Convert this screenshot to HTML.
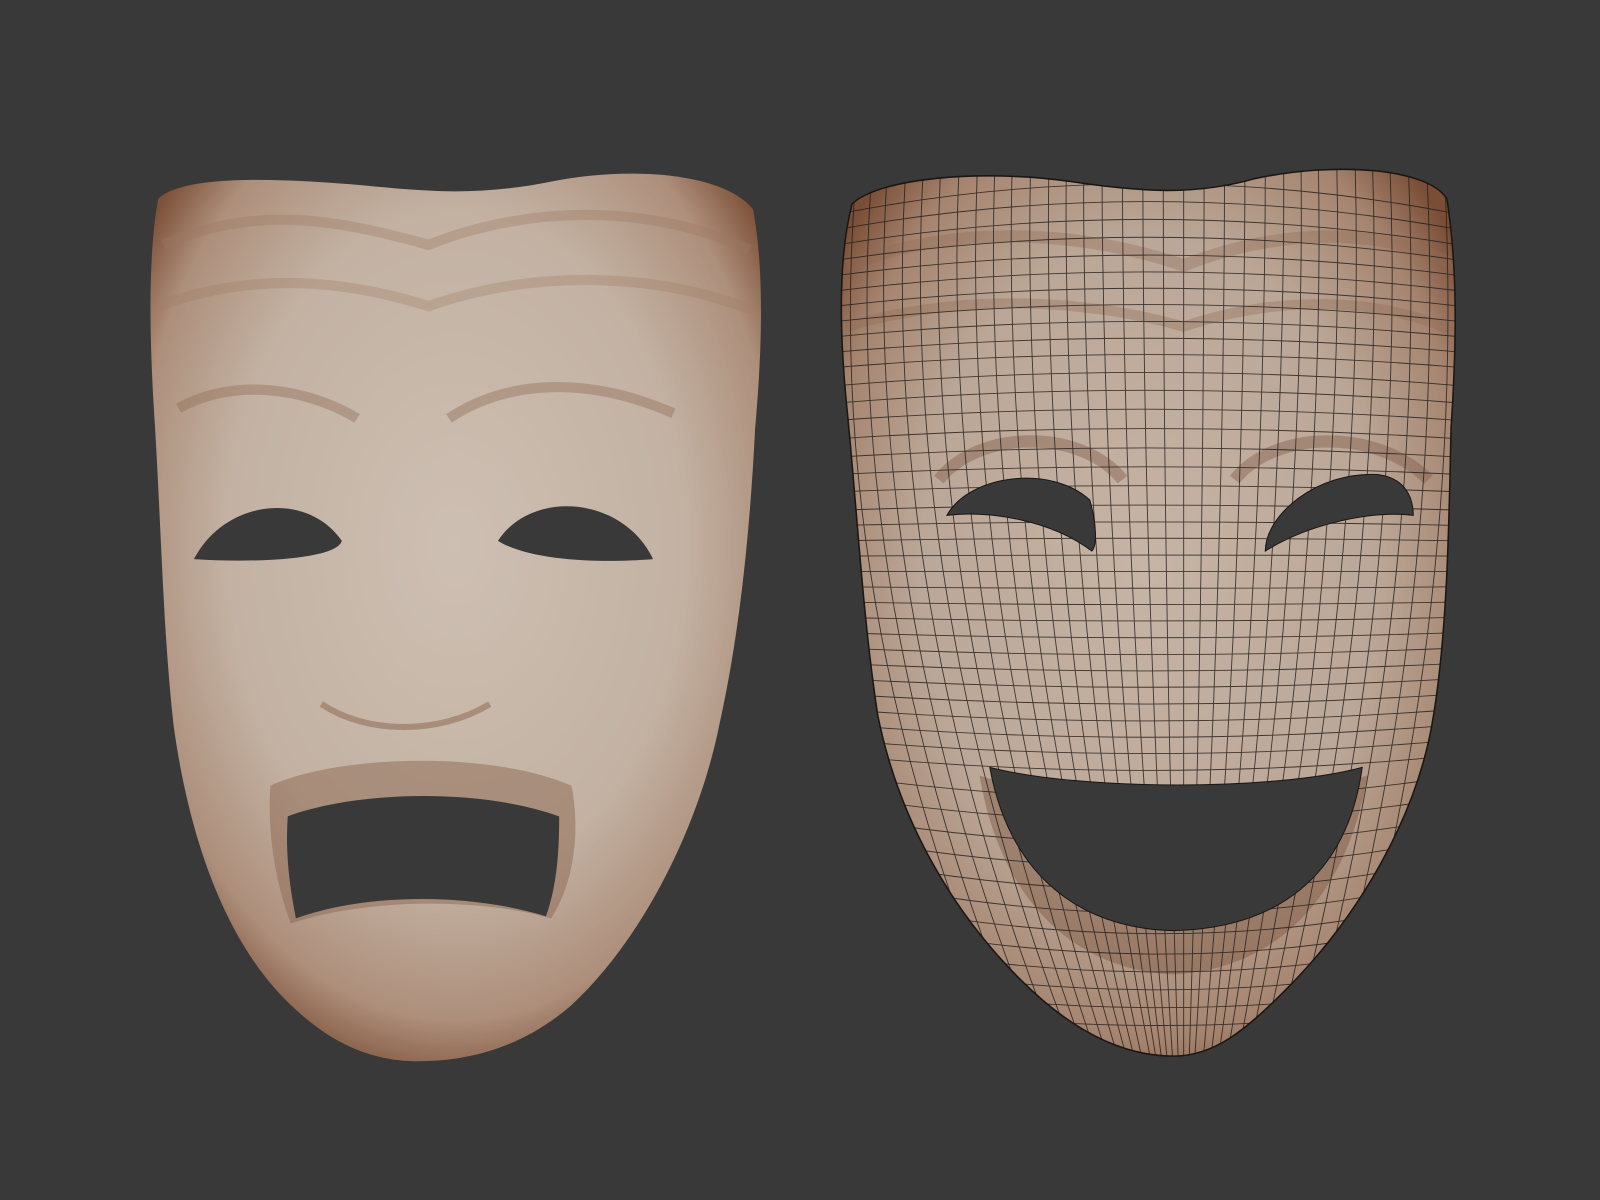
<!DOCTYPE html>
<html><head><meta charset="utf-8"><style>html,body{margin:0;padding:0;background:#393939;overflow:hidden}svg{display:block}</style></head>
<body>
<svg width="1600" height="1200" viewBox="0 0 1568 1176" preserveAspectRatio="none" xmlns="http://www.w3.org/2000/svg">
<defs>
<radialGradient id="skin" cx="0.5" cy="0.42" r="0.62">
<stop offset="0" stop-color="#cdbfb2"/><stop offset="0.6" stop-color="#c3b2a3"/><stop offset="0.86" stop-color="#ad8f7b"/><stop offset="1" stop-color="#7d5038"/>
</radialGradient>
<radialGradient id="skin2" cx="0.5" cy="0.45" r="0.62">
<stop offset="0" stop-color="#c6b4a5"/><stop offset="0.6" stop-color="#bba797"/><stop offset="0.86" stop-color="#a5846f"/><stop offset="1" stop-color="#7a4e36"/>
</radialGradient>
<clipPath id="rc"><path id="rm" d="M835,200 C860,175 960,165 1050,178 C1120,188 1170,192 1230,175 C1310,158 1400,165 1418,195 C1428,260 1428,330 1422,420 C1420,520 1418,620 1405,700 C1390,800 1330,900 1260,970 C1220,1010 1190,1035 1150,1035 C1100,1035 1050,1010 1000,960 C930,890 880,800 860,700 C845,600 840,500 830,400 C822,320 822,250 835,200Z"/></clipPath>
</defs>
<rect width="1568" height="1176" fill="#393939"/>

<!-- Left mask -->
<path d="M155,195 C180,170 280,175 360,182 C420,188 470,192 540,178 C620,162 710,170 738,205 C748,260 748,330 740,420 C735,520 725,620 705,710 C685,810 630,920 560,985 C520,1020 470,1040 410,1040 C360,1040 320,1020 280,980 C220,920 185,820 170,710 C160,620 158,520 152,420 C146,330 145,250 155,195Z" fill="url(#skin)"/>
<path d="M160,240 C250,200 330,215 420,240 C520,200 640,200 735,245" stroke="#9b7862" stroke-width="10" fill="none" opacity="0.35"/>
<path d="M155,300 C250,265 340,275 420,300 C520,265 640,265 740,305" stroke="#a07d66" stroke-width="10" fill="none" opacity="0.35"/>
<path d="M175,400 C230,370 300,380 350,410 M440,410 C500,370 580,370 660,405" stroke="#8f6a53" stroke-width="10" fill="none" opacity="0.4"/>
<path d="M190,548 C220,490 300,480 335,530 C330,548 250,552 190,548Z" fill="#393939"/>
<path d="M488,530 C520,480 610,485 640,548 C590,552 520,550 488,530Z" fill="#393939"/>
<path d="M315,690 C360,720 430,720 480,690" stroke="#8a624c" stroke-width="6" fill="none" opacity="0.5"/>
<path d="M265,770 C330,740 480,735 560,770 C570,820 560,870 540,900 C470,880 360,880 285,905 C268,860 262,810 265,770Z" fill="#8c6752" opacity="0.5"/>
<path d="M282,800 C350,775 470,772 548,800 C548,840 545,870 535,898 C460,875 360,875 290,900 C282,860 280,830 282,800Z" fill="#393939"/>

<!-- Right mask -->
<use href="#rm" fill="url(#skin2)"/>
<g clip-path="url(#rc)">
<path d="M830,260 C950,215 1070,230 1160,260 C1250,225 1350,220 1425,260" stroke="#8f6a53" stroke-width="12" fill="none" opacity="0.35"/>
<path d="M830,320 C950,285 1070,295 1160,320 C1250,290 1350,290 1425,325" stroke="#8f6a53" stroke-width="10" fill="none" opacity="0.35"/>
<path d="M920,470 C960,420 1060,420 1100,470 M1210,470 C1250,420 1350,420 1400,470" stroke="#7d5640" stroke-width="12" fill="none" opacity="0.4"/>
<path d="M960,760 C1050,790 1250,790 1340,760 C1320,880 1250,950 1150,955 C1050,950 980,880 960,760Z" fill="#7d5640" opacity="0.45"/>
<g stroke="#1e1a17" stroke-width="0.9" fill="none" opacity="0.8">
<path d="M820,210 Q1125,150 1430,210"/><path d="M820,225 Q1125,170 1430,225"/><path d="M820,240 Q1125,190 1430,240"/><path d="M820,255 Q1125,210 1430,255"/><path d="M820,270 Q1125,230 1430,270"/><path d="M820,285 Q1125,248 1430,285"/><path d="M820,300 Q1125,265 1430,300"/><path d="M820,315 Q1125,282 1430,315"/><path d="M820,330 Q1125,300 1430,330"/><path d="M820,345 Q1125,318 1430,345"/><path d="M820,360 Q1125,335 1430,360"/><path d="M820,378 Q1125,352 1430,378"/><path d="M820,395 Q1125,370 1430,395"/><path d="M820,412 Q1125,390 1430,412"/><path d="M820,430 Q1125,410 1430,430"/><path d="M820,448 Q1125,430 1430,448"/><path d="M820,465 Q1125,450 1430,465"/><path d="M820,482 Q1125,470 1430,482"/><path d="M820,500 Q1125,490 1430,500"/><path d="M820,515 Q1125,508 1430,515"/><path d="M820,530 Q1125,525 1430,530"/><path d="M820,545 Q1125,543 1430,545"/><path d="M820,560 Q1125,560 1430,560"/><path d="M820,575 Q1125,578 1430,575"/><path d="M820,590 Q1125,595 1430,590"/><path d="M820,605 Q1125,612 1430,605"/><path d="M820,620 Q1125,630 1430,620"/><path d="M820,635 Q1125,648 1430,635"/><path d="M820,650 Q1125,665 1430,650"/><path d="M820,665 Q1125,682 1430,665"/><path d="M820,680 Q1125,700 1430,680"/><path d="M820,695 Q1125,718 1430,695"/><path d="M820,710 Q1125,735 1430,710"/><path d="M820,725 Q1125,752 1430,725"/><path d="M820,740 Q1125,770 1430,740"/><path d="M820,760 Q1150,805 1430,760"/><path d="M820,780 Q1150,830 1430,780"/><path d="M820,800 Q1150,855 1430,800"/><path d="M820,820 Q1150,880 1430,820"/><path d="M820,840 Q1150,905 1430,840"/><path d="M820,860 Q1150,930 1430,860"/><path d="M820,880 Q1150,950 1430,880"/><path d="M820,900 Q1150,970 1430,900"/><path d="M820,920 Q1150,985 1430,920"/><path d="M820,940 Q1150,1000 1430,940"/><path d="M820,960 Q1150,1015 1430,960"/><path d="M820,980 Q1150,1030 1430,980"/>
<path d="M840,160 Q800,600 1000,1050"/><path d="M855,160 Q820,600 1015,1050"/><path d="M870,160 Q840,600 1030,1050"/><path d="M888,160 Q860,600 1045,1050"/><path d="M905,160 Q880,600 1060,1050"/><path d="M922,160 Q900,600 1070,1050"/><path d="M940,160 Q920,600 1080,1050"/><path d="M958,160 Q940,600 1090,1050"/><path d="M975,160 Q960,600 1100,1050"/><path d="M992,160 Q980,600 1108,1050"/><path d="M1010,160 Q1000,600 1115,1050"/><path d="M1028,160 Q1020,600 1122,1050"/><path d="M1045,160 Q1040,600 1130,1050"/><path d="M1062,160 Q1060,600 1135,1050"/><path d="M1080,160 Q1080,600 1140,1050"/><path d="M1100,160 Q1100,600 1145,1050"/><path d="M1120,160 Q1120,600 1150,1050"/><path d="M1140,160 Q1140,600 1155,1050"/><path d="M1160,160 Q1160,600 1160,1050"/><path d="M1180,160 Q1180,600 1165,1050"/><path d="M1200,160 Q1200,600 1170,1050"/><path d="M1220,160 Q1220,600 1178,1050"/><path d="M1240,160 Q1240,600 1185,1050"/><path d="M1258,160 Q1260,600 1192,1050"/><path d="M1275,160 Q1280,600 1200,1050"/><path d="M1292,160 Q1300,600 1210,1050"/><path d="M1310,160 Q1320,600 1220,1050"/><path d="M1328,160 Q1340,600 1232,1050"/><path d="M1345,160 Q1360,600 1245,1050"/><path d="M1362,160 Q1380,600 1260,1050"/><path d="M1380,160 Q1400,600 1275,1050"/><path d="M1398,160 Q1420,600 1292,1050"/><path d="M1415,160 Q1440,600 1310,1050"/>
</g>
</g>
<path d="M835,200 C860,175 960,165 1050,178 C1120,188 1170,192 1230,175 C1310,158 1400,165 1418,195 C1428,260 1428,330 1422,420 C1420,520 1418,620 1405,700 C1390,800 1330,900 1260,970 C1220,1010 1190,1035 1150,1035 C1100,1035 1050,1010 1000,960 C930,890 880,800 860,700 C845,600 840,500 830,400 C822,320 822,250 835,200Z" fill="none" stroke="#1a1612" stroke-width="1.5"/>
<path d="M928,505 C950,465 1030,455 1068,490 C1075,515 1075,535 1070,540 C1030,510 970,500 928,505Z" fill="#393939" stroke="#1a1612"/>
<path d="M1240,540 C1240,505 1290,462 1350,465 C1375,468 1385,485 1385,505 C1340,500 1280,515 1240,540Z" fill="#393939" stroke="#1a1612"/>
<path d="M970,752 C1060,775 1250,775 1335,752 C1320,860 1250,910 1150,912 C1060,910 990,860 970,752Z" fill="#393939" stroke="#1a1612"/>
</svg>
</body></html>
